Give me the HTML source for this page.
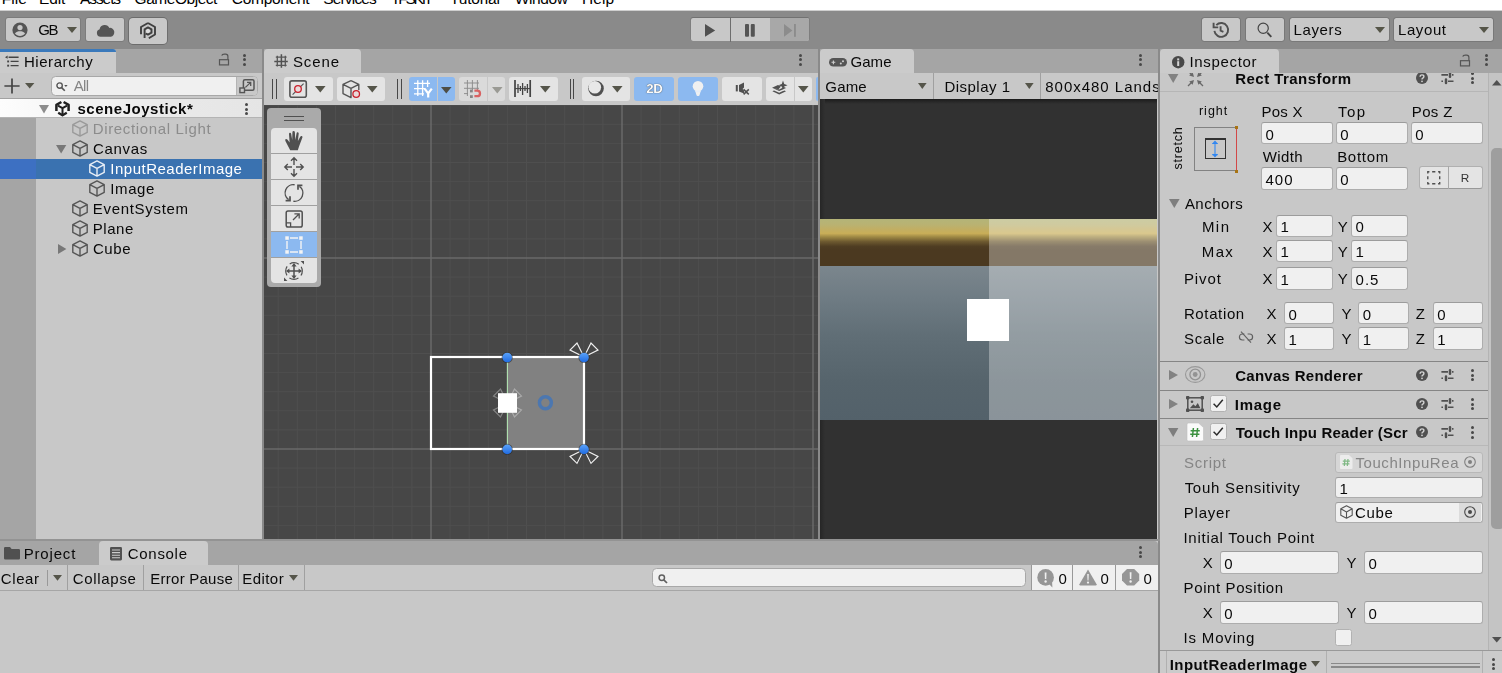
<!DOCTYPE html>
<html><head><meta charset="utf-8">
<style>
*{box-sizing:border-box;margin:0;padding:0}
html,body{width:1502px;height:673px;overflow:hidden;background:#8a8a8a}
body{font-family:"Liberation Sans",sans-serif;font-size:15px;color:#090909;position:relative}
.a{position:absolute}
.t{position:absolute;white-space:nowrap;line-height:20px;height:20px}
.pane,#toolbar,#stb{will-change:transform}
.b{font-weight:bold}
.pane{position:absolute;background:#c8c8c8}
.tabbar{position:absolute;left:0;right:0;top:0;height:24px;background:#a5a5a5}
.tab{position:absolute;top:0;height:24px;background:#cbcbcb;border-radius:4px 4px 0 0}
.btn{position:absolute;background:#e4e4e4;border-radius:2px}
.tb{position:absolute;background:#c8c8c8;border-radius:2px}
.fld{position:absolute;background:#f0f0f0;border:1px solid #adadad;border-top-color:#9c9c9c;border-radius:3px;height:20px;line-height:18px;padding-left:4px;font-size:15px}
svg{position:absolute;overflow:visible}
#f4,#f_pivoty{letter-spacing:1px}
.kb{position:absolute;width:3px}
.kb i{display:block;width:3px;height:3px;border-radius:50%;background:#484848;margin-bottom:1.700px}
.arr{position:absolute;width:0;height:0;border-left:5px solid transparent;border-right:5px solid transparent;border-top:6px solid #555548}
</style><style id="calib">
#t_gb{letter-spacing:-1.231px;margin-left:-0.33px}
#t_layers{letter-spacing:0.639px;margin-left:-1.06px}
#t_layout{letter-spacing:0.599px;margin-left:-0.55px}
#t_hier{letter-spacing:0.570px;margin-left:-0.92px}
#t_all{letter-spacing:-0.564px;margin-left:0.17px}
#t_scene{letter-spacing:0.540px;margin-left:-0.10px}
#t_dl{letter-spacing:0.648px;margin-left:-0.75px}
#t_canvas{letter-spacing:0.692px;margin-left:-0.56px}
#t_iri{letter-spacing:0.491px;margin-left:-0.96px}
#t_image{letter-spacing:0.623px;margin-left:-1.07px}
#t_es{letter-spacing:0.693px;margin-left:-0.78px}
#t_plane{letter-spacing:0.570px;margin-left:-0.78px}
#t_cube{letter-spacing:0.555px;margin-left:-0.56px}
#t_scenetab{letter-spacing:0.936px;margin-left:-1.12px}
#t_gametab{letter-spacing:0.084px;margin-left:-0.61px}
#t_game2{letter-spacing:0.172px;margin-left:-0.47px}
#t_display{letter-spacing:0.492px;margin-left:-0.62px}
#t_insp{letter-spacing:0.685px;margin-left:-1.17px}
#t_rt{letter-spacing:0.451px;margin-left:-0.61px}
#t_right{letter-spacing:1.020px;margin-left:-0.59px}
#t_posx{letter-spacing:0.201px;margin-left:-0.79px}
#t_top{letter-spacing:1.487px;margin-left:-0.03px}
#t_posz{letter-spacing:0.315px;margin-left:-0.84px}
#t_width{letter-spacing:0.415px;margin-left:0.26px}
#t_bottom{letter-spacing:0.725px;margin-left:-0.87px}
#t_anchors{letter-spacing:0.470px;margin-left:0.09px}
#t_min{letter-spacing:1.478px;margin-left:-0.81px}
#t_max{letter-spacing:1.285px;margin-left:-0.84px}
#t_pivot{letter-spacing:0.942px;margin-left:-0.92px}
#t_rot{letter-spacing:0.635px;margin-left:-0.92px}
#t_scl{letter-spacing:0.718px;margin-left:-0.86px}
#t_cr{letter-spacing:0.288px;margin-left:-0.39px}
#t_img{letter-spacing:0.723px;margin-left:-0.68px}
#t_tir{letter-spacing:0.181px;margin-left:0.13px}
#t_script{letter-spacing:0.708px;margin-left:-0.66px}
#t_touh{letter-spacing:0.726px;margin-left:-0.05px}
#t_player{letter-spacing:0.723px;margin-left:-0.84px}
#t_itp{letter-spacing:0.747px;margin-left:-0.99px}
#t_pp{letter-spacing:0.600px;margin-left:-0.79px}
#t_ism{letter-spacing:0.851px;margin-left:-0.99px}
#t_tirea{letter-spacing:0.579px;margin-left:0.15px}
#t_cubef{letter-spacing:0.724px;margin-left:-0.40px}
#t_foot{letter-spacing:0.431px;margin-left:-0.79px}
#t_project{letter-spacing:0.818px;margin-left:-0.79px}
#t_console{letter-spacing:0.693px;margin-left:-0.62px}
#t_clear{letter-spacing:0.638px;margin-left:-0.61px}
#t_collapse{letter-spacing:0.688px;margin-left:-0.45px}
#t_errp{letter-spacing:0.234px;margin-left:-0.95px}
#t_editor{letter-spacing:0.437px;margin-left:-0.84px}
#m_edit{letter-spacing:-0.194px;margin-left:-0.91px}
#m_assets{letter-spacing:-1.101px;margin-left:0.09px}
#m_go{letter-spacing:-0.461px;margin-left:-0.45px}
#m_comp{letter-spacing:-0.284px;margin-left:-0.22px}
#m_serv{letter-spacing:-0.825px;margin-left:-0.82px}
#m_tfs{letter-spacing:-2.210px;margin-left:-0.05px}
#m_tut{letter-spacing:-0.175px;margin-left:0.03px}
#m_win{letter-spacing:-0.381px;margin-left:0.75px}
#m_help{letter-spacing:0.040px;margin-left:-0.91px}
#t_res{letter-spacing:0.980px;margin-left:0.29px}
</style>
</head><body>

<!-- MENU BAR -->
<div class="a" id="menubar" style="left:0;top:0;width:1502px;height:10px;background:#fff;overflow:hidden;font-size:15.5px;color:#000">
<span class="t" id="m_file" style="left:1.800px;top:-11.300px">File</span>
<span class="t" id="m_edit" style="left:40px;top:-11.300px">Edit</span>
<span class="t" id="m_assets" style="left:80px;top:-11.300px">Assets</span>
<span class="t" id="m_go" style="left:135px;top:-11.300px">GameObject</span>
<span class="t" id="m_comp" style="left:232px;top:-11.300px">Component</span>
<span class="t" id="m_serv" style="left:324px;top:-11.300px">Services</span>
<span class="t" id="m_tfs" style="left:391px;top:-11.300px">TFSKIT</span>
<span class="t" id="m_tut" style="left:450px;top:-11.300px">Tutorial</span>
<span class="t" id="m_win" style="left:514px;top:-11.300px">Window</span>
<span class="t" id="m_help" style="left:583px;top:-11.300px">Help</span>
</div>
<div class="a" style="left:0;top:10px;width:1502px;height:1px;background:#cfcfcf"></div>

<!-- MAIN TOOLBAR -->
<div id="toolbar">
<div class="tb" style="left:6px;top:18px;width:74px;height:23px;box-shadow:0 0 0 .7px #787878"></div>
<svg style="left:12px;top:22px" width="16" height="16" viewBox="0 0 16 16"><circle cx="8" cy="8" r="7.6" fill="#555"/><circle cx="8" cy="5.6" r="2.6" fill="#c8c8c8"/><path d="M2.9 11.6C4 9.9 6 9.3 8 9.3s4 .6 5.1 2.3C11.9 13.2 10 14 8 14s-3.9-.8-5.1-2.4z" fill="#c8c8c8"/></svg>
<span class="t" id="t_gb" style="left:38.5px;top:19.700px">GB</span>
<div class="arr" style="left:66.5px;top:27px"></div>
<div class="tb" style="left:86px;top:18px;width:38px;height:23px;box-shadow:0 0 0 .7px #787878"></div>
<svg style="left:95.5px;top:23.5px" width="19" height="13" viewBox="0 0 19 13"><path d="M4.6 12.8a3.9 3.9 0 0 1-1-7.6A5.2 5.2 0 0 1 13.400 3.900a4.200 4.500 0 0 1 1.400 8.900z" fill="#555"/></svg>
<div class="tb" style="left:129px;top:17.600px;width:38px;height:26.600px;border-radius:4px;box-shadow:0 0 0 .9px #6c6c6c"></div>
<svg style="left:140px;top:22px" width="16" height="18" viewBox="0 0 16 18"><circle cx="8.100" cy="9" r="2.300" fill="#dcdcdc"/><path d="M8 1L15 5V12.500L8.800 16.200M8 1L1 5V12.200" fill="none" stroke="#404040" stroke-width="1.900" stroke-linejoin="round"/><path d="M4.600 16V7.300L8 5.400L11.500 7.300V10.700L8 12.600L5.800 11.500" fill="none" stroke="#404040" stroke-width="1.900" stroke-linejoin="round"/></svg>

<div class="tb" style="left:690.5px;top:17.500px;width:118.500px;height:23.700px;box-shadow:0 -0.5px 0 .5px #727272"></div>
<div class="a" style="left:770px;top:17.5px;width:39px;height:23.700px;background:#a8a8a8;border-radius:0 2px 2px 0"></div>
<div class="a" style="left:730px;top:17px;width:1px;height:24.500px;background:#6e6e6e"></div>
<svg style="left:690px;top:17px" width="120" height="25" viewBox="0 0 120 25"><path d="M15 7V19.800L25.200 13.400Z" fill="#505050"/><rect x="55" y="7" width="4" height="12.800" rx="1" fill="#555"/><rect x="60.800" y="7" width="4" height="12.800" rx="1" fill="#555"/><path d="M94 7V19.800L102.400 13.400Z" fill="#8c8c8c"/><rect x="104" y="7" width="1.900" height="12.800" fill="#8c8c8c"/></svg>

<div class="tb" style="left:1201.700px;top:17.500px;width:38.500px;height:23.700px;box-shadow:0 0 0 .8px #747474;border-radius:2.500px"></div>
<svg style="left:1211px;top:20px" width="20" height="20" viewBox="0 0 20 20"><path d="M3.400 10.800A6.900 6.900 0 1 0 5.300 5.100" fill="none" stroke="#505050" stroke-width="1.900"/><path d="M2.600 2.800V7.400H7.200" fill="none" stroke="#505050" stroke-width="1.900"/><path d="M9.600 6.200V10.600L12.400 11.800" fill="none" stroke="#505050" stroke-width="1.900"/></svg>
<div class="tb" style="left:1245.700px;top:17.500px;width:38.500px;height:23.700px;box-shadow:0 0 0 .8px #747474;border-radius:2.500px"></div>
<svg style="left:1255px;top:20px" width="20" height="20" viewBox="0 0 20 20"><circle cx="8.200" cy="8.300" r="5.100" fill="none" stroke="#444" stroke-width="1.200"/><path d="M12.300 12.600L16.300 16.800" stroke="#444" stroke-width="1.900"/></svg>
<div class="tb" style="left:1290px;top:17.500px;width:98.500px;height:23.700px;box-shadow:0 0 0 .8px #747474;border-radius:2.500px"></div>
<span class="t" id="t_layers" style="left:1294.500px;top:19.700px">Layers</span>
<div class="arr" style="left:1374.500px;top:27px"></div>
<div class="tb" style="left:1394px;top:17.500px;width:99px;height:23.700px;box-shadow:0 0 0 .8px #747474;border-radius:2.500px"></div>
<span class="t" id="t_layout" style="left:1398.500px;top:19.700px">Layout</span>
<div class="arr" style="left:1478.500px;top:27px"></div>
</div>

<!-- HIERARCHY -->
<div class="pane" id="hier" style="left:0;top:49px;width:262.300px;height:490px;overflow:hidden">
 <div class="tabbar"></div>
 <div class="tab" style="left:0;width:116px;border-radius:0 3px 0 0"></div>
 <div class="a" style="left:0;top:0;width:116px;height:2.600px;background:#3a79bb;border-radius:0 3px 0 0"></div>
 <svg style="left:4.500px;top:7px" width="14" height="11" viewBox="0 0 14 11"><path d="M3.600 1.200H13.600M5.600 5.400H13.600M5.600 9.600H13.600" stroke="#444" stroke-width="1.400"/><path d="M0 1.200L2.600 -.4V2.800Z" fill="#444"/><rect x="2.200" y="4.500" width="1.900" height="1.900" fill="#444"/><rect x="2.200" y="8.700" width="1.900" height="1.900" fill="#444"/></svg>
 <span class="t" id="t_hier" style="left:24.800px;top:2.600px">Hierarchy</span>
 <svg style="left:218px;top:4px" width="12" height="13" viewBox="0 0 12 13"><rect x="1.500" y="6.700" width="9" height="5.200" fill="none" stroke="#555" stroke-width="1.200"/><path d="M3.800 2.600Q4 1.200 6.400 1.200H7.600Q9.900 1.200 9.900 3.400V6.600" fill="none" stroke="#555" stroke-width="1.200"/></svg>
 <div class="kb" style="left:243.400px;top:4.500px"><i></i><i></i><i></i></div>
 <!-- toolbar -->
 <svg style="left:4px;top:29px" width="16" height="16" viewBox="0 0 16 16"><path d="M8 .4V15.400M.4 8H15.600" stroke="#444" stroke-width="1.700"/></svg>
 <svg style="left:24.8px;top:34px" width="9.4" height="5.6" viewBox="0 0 9.4 5.6"><path d="M0 0H9.4L4.7 5.6Z" fill="#55554a"/></svg>
 <div class="fld" style="left:50.500px;top:27.300px;width:207px;height:19.400px;border-radius:4.500px;border-color:#a8a8a8"></div>
 <div class="a" style="left:235.500px;top:28.300px;width:21px;height:17.400px;background:#c8c8c8;border-left:1px solid #b4b4b4;border-radius:0 3.500px 3.500px 0"></div>
 <svg style="left:239px;top:29.500px" width="16" height="15" viewBox="0 0 16 15"><rect x="4.400" y=".8" width="10.600" height="10.400" rx="1.500" fill="none" stroke="#555" stroke-width="1.500"/><rect x=".9" y="9" width="4.600" height="4.600" fill="#c8c8c8" stroke="#555" stroke-width="1.400"/><path d="M6.400 8.400L11.400 3.600M8 3.400H11.700V7" fill="none" stroke="#555" stroke-width="1.300"/></svg>
 <svg style="left:56px;top:32.500px" width="12" height="10" viewBox="0 0 12 10"><circle cx="3.600" cy="3.600" r="2.700" fill="none" stroke="#555" stroke-width="1.400"/><path d="M5.600 5.600L8.800 8.800" stroke="#555" stroke-width="1.600"/><path d="M8.200 3H11.600L9.900 5Z" fill="#555"/></svg>
 <span class="t" id="t_all" style="left:73.500px;top:26.700px;color:#858585">All</span>
 <!-- list -->
 <div class="a" style="left:0;top:69px;width:36px;height:421px;background:#a5a5a5"></div>
 <div class="a" style="left:0;top:49.200px;width:263px;height:20.200px;background:linear-gradient(90deg,#fdfdfd 0%,#f4f4f4 30%,#e9e9e9 65%,#e5e5e5 100%);border-top:1px solid #a2a2a2;border-bottom:1px solid #b4b4b4"></div>
 <svg style="left:39px;top:56.2px" width="10" height="8.6" viewBox="0 0 10 8.6"><path d="M0 0H10L5.0 8.6Z" fill="#8c8c8c"/></svg>
 <svg style="left:55.100px;top:51.200px" width="15" height="17" viewBox="0 0 15 17"><g fill="none" stroke="#202020" stroke-linejoin="round"><path d="M1.400 11V4.800L6.400 2" stroke-width="2.500"/><path d="M13.600 11V4.800L8.600 2" stroke-width="2.500"/><path d="M3.200 12.800L7.500 15.300L11.800 12.800" stroke-width="2.300"/><path d="M7.500 15.300V8.200M3 5.600L7.500 8.200L12 5.600" stroke-width="2"/></g></svg>
 <span class="t b" id="t_scene" style="left:77.500px;top:49.700px">sceneJoystick*</span>
 <div class="kb" style="left:245.300px;top:54px"><i></i><i></i><i></i></div>
 <svg style="left:72.3px;top:71.4px" width="16" height="17" viewBox="0 0 16 17"><path d="M8 .9L15.200 4.600V12.400L8 16.100L.8 12.400V4.600ZM.8 4.600L8 8.400L15.200 4.600M8 8.400V16.100" fill="none" stroke="#9a9a9a" stroke-width="1.400" stroke-linejoin="round"/></svg>
 <span class="t" id="t_dl" style="left:93.500px;top:69.7px;color:#8c8c8c">Directional Light</span>
 <svg style="left:56px;top:96.3px" width="10.3" height="8.4" viewBox="0 0 10.3 8.4"><path d="M0 0H10.3L5.15 8.4Z" fill="#787878"/></svg>
 <svg style="left:72.3px;top:91.4px" width="16" height="17" viewBox="0 0 16 17"><path d="M8 .9L15.200 4.600V12.400L8 16.100L.8 12.400V4.600ZM.8 4.600L8 8.400L15.200 4.600M8 8.400V16.100" fill="none" stroke="#555" stroke-width="1.400" stroke-linejoin="round"/></svg>
 <span class="t" id="t_canvas" style="left:93.500px;top:89.7px">Canvas</span>
 <div class="a" style="left:0;top:110px;width:263px;height:20px;background:#3a72b0"></div>
 <div class="a" style="left:0;top:110px;width:36px;height:20px;background:#3d70c2"></div>
 <svg style="left:89.3px;top:111.4px" width="16" height="17" viewBox="0 0 16 17"><path d="M8 .9L15.200 4.600V12.400L8 16.100L.8 12.400V4.600ZM.8 4.600L8 8.400L15.200 4.600M8 8.400V16.100" fill="none" stroke="#e8eef6" stroke-width="1.400" stroke-linejoin="round"/></svg>
 <span class="t" id="t_iri" style="left:111.300px;top:109.7px;color:#fff">InputReaderImage</span>
 <svg style="left:89.3px;top:131.39999999999998px" width="16" height="17" viewBox="0 0 16 17"><path d="M8 .9L15.200 4.600V12.400L8 16.100L.8 12.400V4.600ZM.8 4.600L8 8.400L15.200 4.600M8 8.400V16.100" fill="none" stroke="#555" stroke-width="1.400" stroke-linejoin="round"/></svg>
 <span class="t" id="t_image" style="left:111.300px;top:129.7px">Image</span>
 <svg style="left:72.3px;top:151.39999999999998px" width="16" height="17" viewBox="0 0 16 17"><path d="M8 .9L15.200 4.600V12.400L8 16.100L.8 12.400V4.600ZM.8 4.600L8 8.400L15.200 4.600M8 8.400V16.100" fill="none" stroke="#555" stroke-width="1.400" stroke-linejoin="round"/></svg>
 <span class="t" id="t_es" style="left:93.500px;top:149.7px">EventSystem</span>
 <svg style="left:72.3px;top:171.39999999999998px" width="16" height="17" viewBox="0 0 16 17"><path d="M8 .9L15.200 4.600V12.400L8 16.100L.8 12.400V4.600ZM.8 4.600L8 8.400L15.200 4.600M8 8.400V16.100" fill="none" stroke="#555" stroke-width="1.400" stroke-linejoin="round"/></svg>
 <span class="t" id="t_plane" style="left:93.500px;top:169.7px">Plane</span>
 <svg style="left:57.5px;top:194.7px" width="8.4" height="10" viewBox="0 0 8.4 10"><path d="M0 0V10L8.4 5.0Z" fill="#787878"/></svg>
 <svg style="left:72.3px;top:191.39999999999998px" width="16" height="17" viewBox="0 0 16 17"><path d="M8 .9L15.200 4.600V12.400L8 16.100L.8 12.400V4.600ZM.8 4.600L8 8.400L15.200 4.600M8 8.400V16.100" fill="none" stroke="#555" stroke-width="1.400" stroke-linejoin="round"/></svg>
 <span class="t" id="t_cube" style="left:93.500px;top:189.7px">Cube</span>
</div>

<!-- SCENE -->
<div class="pane" id="scene" style="left:264px;top:49px;width:554px;height:490px;overflow:hidden">
 <div class="tabbar"></div>
 <div class="tab" style="left:0;width:97px"></div>
 <svg style="left:10px;top:5px" width="14" height="14" viewBox="0 0 14 14"><path d="M7.400 .3V13.800M.3 7.500H13.800" stroke="#505050" stroke-width="1.500"/><path d="M3.300 1.800V12.600M11.300 1.800V12.600M1.800 3.200H12.600M1.800 11.300H12.600" stroke="#585858" stroke-width="1.300"/></svg>
 <span class="t" id="t_scenetab" style="left:30px;top:2.600px">Scene</span>
 <div class="kb" style="left:535.400px;top:4.700px"><i></i><i></i><i></i></div>
 <div class="a" id="sview" style="left:0;top:56px;width:554px;height:434px;background:#474747;overflow:hidden">
<svg class="a" style="left:0;top:0" width="554" height="434" viewBox="0 0 554 434">
<path d="M14.2 0V434M33.3 0V434M52.4 0V434M71.5 0V434M90.6 0V434M109.7 0V434M128.8 0V434M147.9 0V434M186.1 0V434M205.2 0V434M224.3 0V434M243.4 0V434M262.5 0V434M281.6 0V434M300.7 0V434M319.8 0V434M338.9 0V434M377.1 0V434M396.2 0V434M415.3 0V434M434.4 0V434M453.5 0V434M472.6 0V434M491.7 0V434M510.8 0V434M529.9 0V434M0 0.2H554M0 19.3H554M0 38.4H554M0 57.5H554M0 76.6H554M0 95.7H554M0 114.8H554M0 133.9H554M0 172.1H554M0 191.2H554M0 210.3H554M0 229.4H554M0 248.5H554M0 267.6H554M0 286.7H554M0 305.8H554M0 324.9H554M0 363.1H554M0 382.2H554M0 401.3H554M0 420.4H554" stroke="#4f4f4f" stroke-width="1" fill="none"/>
<path d="M167.0 0V434M358.0 0V434M549.0 0V434M0 153.0H554M0 344.0H554" stroke="#6a6a6a" stroke-width="1.500" fill="none"/>
<rect x="243.5" y="252" width="76.5" height="92" fill="#818181"/>
<path d="M243.4 252V344" stroke="#b4e6b4" stroke-width="1.1"/>
<rect x="167" y="252" width="153" height="92" fill="none" stroke="#fff" stroke-width="2.2"/>
<path d="M243.5 298L229.5 291L236.5 284ZM243.5 298L229.5 305L236.5 312ZM243.5 298L257.5 291L250.5 284ZM243.5 298L257.5 305L250.5 312Z" fill="none" stroke="#fff" stroke-opacity="0.33" stroke-width="1.2"/>
<rect x="234" y="288.2" width="19" height="19.6" fill="#fff"/>
<circle cx="281.4" cy="297.8" r="5.95" fill="none" stroke="#3f74bc" stroke-opacity="0.8" stroke-width="3.5"/>
<path d="M320 252L306 245L313 238ZM320 252L334 245L327 238ZM320 344.4L306 351.4L313 358.4ZM320 344.4L334 351.4L327 358.4Z" fill="none" stroke="#fff" stroke-opacity=".92" stroke-width="1.150"/>
<defs><linearGradient id="hg" x1="0" y1="0" x2="0" y2="1"><stop offset="0" stop-color="#5aa2fa"/><stop offset="1" stop-color="#1f6ae0"/></linearGradient></defs>
<circle cx="243.2" cy="252.5" r="5.6" fill="#222" fill-opacity="0.55"/><circle cx="243.2" cy="252.5" r="4.8" fill="url(#hg)"/>
<circle cx="320" cy="252.5" r="5.6" fill="#222" fill-opacity="0.55"/><circle cx="320" cy="252.5" r="4.8" fill="url(#hg)"/>
<circle cx="243.2" cy="344.4" r="5.6" fill="#222" fill-opacity="0.55"/><circle cx="243.2" cy="344.4" r="4.8" fill="url(#hg)"/>
<circle cx="320" cy="344.4" r="5.6" fill="#222" fill-opacity="0.55"/><circle cx="320" cy="344.4" r="4.8" fill="url(#hg)"/>
</svg>

<div class="a" style="left:3px;top:3px;width:54px;height:179px;background:#aaa;border-radius:4px"></div>
<div class="a" style="left:20px;top:11px;width:20px;height:1.3px;background:#505050"></div><div class="a" style="left:20px;top:14.799999999999997px;width:20px;height:1.3px;background:#505050"></div>
<div class="a" style="left:7px;top:23px;width:46px;height:25px;background:#e4e4e4;border-radius:4px 4px 0 0"></div>
<div class="a" style="left:7px;top:48px;width:46px;height:1px;background:#a0a0a0"></div>
<div class="a" style="left:7px;top:49px;width:46px;height:25px;background:#e4e4e4;border-radius:0"></div>
<div class="a" style="left:7px;top:74px;width:46px;height:1px;background:#a0a0a0"></div>
<div class="a" style="left:7px;top:75px;width:46px;height:25px;background:#e4e4e4;border-radius:0"></div>
<div class="a" style="left:7px;top:100px;width:46px;height:1px;background:#a0a0a0"></div>
<div class="a" style="left:7px;top:101px;width:46px;height:25px;background:#e4e4e4;border-radius:0"></div>
<div class="a" style="left:7px;top:126px;width:46px;height:1px;background:#a0a0a0"></div>
<div class="a" style="left:7px;top:127px;width:46px;height:25px;background:#8cb9f0;border-radius:0"></div>
<div class="a" style="left:7px;top:152px;width:46px;height:1px;background:#a0a0a0"></div>
<div class="a" style="left:7px;top:153px;width:46px;height:25px;background:#e4e4e4;border-radius:0 0 4px 4px"></div>
<svg style="left:20px;top:25px" width="20" height="21" viewBox="0 0 20 21"><path d="M6.200 20.200L1.400 11Q.6 9.200 2.200 9Q3.400 9 4.200 10.600L5.600 12.600L5 4Q5 2.800 6 2.800Q7 2.800 7.200 4L8.200 10L8.400 2.400Q8.400 1 9.600 1Q10.800 1 10.900 2.400L11.300 10L12.600 3.200Q12.800 2 13.800 2.200Q14.800 2.400 14.700 3.600L13.900 11L16.400 6.600Q17 5.600 17.900 6Q18.800 6.500 18.400 7.600L15.200 16L13.800 20.200Z" fill="#505050"/></svg>
<svg style="left:20px;top:52px" width="20" height="20" viewBox="0 0 20 20"><path d="M10 1V8M10 12V19M1 10H8M12 10H19M7 3.800L10 .8L13 3.800M7 16.200L10 19.200L13 16.200M3.800 7L.8 10L3.800 13M16.200 7L19.200 10L16.200 13" fill="none" stroke="#505050" stroke-width="1.400"/></svg>
<svg style="left:20px;top:78px" width="20" height="20" viewBox="0 0 20 20"><path d="M10.600 1.800A8.200 8.200 0 0 0 4.600 16.600M9.400 18.200A8.200 8.200 0 0 0 15.400 3.400" fill="none" stroke="#505050" stroke-width="1.400"/><path d="M1.600 17.600H6V13.200M18.400 2.400H14V6.800" fill="none" stroke="#505050" stroke-width="1.700"/></svg>
<svg style="left:21px;top:105px" width="18" height="18" viewBox="0 0 18 18"><rect x="1.200" y="1" width="16" height="16" rx="1.800" fill="none" stroke="#505050" stroke-width="1.500"/><path d="M1.200 12.800H5.600V17" fill="none" stroke="#505050" stroke-width="1.300"/><path d="M8 10L14 4M9.400 3.800H14.200V8.600" fill="none" stroke="#505050" stroke-width="1.300"/></svg>
<svg style="left:21px;top:131px" width="18" height="18" viewBox="0 0 18 18"><path d="M2 5V13M16 5V13M5 2H13M5 16H13" stroke="#f4f4f4" stroke-width="1.400"/><rect x=".3" y=".3" width="3.500" height="3.500" fill="#f4f4f4"/><rect x="14.200" y=".3" width="3.500" height="3.500" fill="#f4f4f4"/><rect x=".3" y="14.200" width="3.500" height="3.500" fill="#f4f4f4"/><rect x="14.200" y="14.200" width="3.500" height="3.500" fill="#f4f4f4"/></svg>
<svg style="left:20px;top:156px" width="20" height="20" viewBox="0 0 20 20"><circle cx="10" cy="10" r="8.300" fill="none" stroke="#505050" stroke-width="1.200" stroke-dasharray="9.500 3.540" stroke-dashoffset="4.750"/><path d="M10 3.600V16.400M3.600 10H16.400" stroke="#505050" stroke-width="1.500"/><path d="M10 2L12.600 5.400H7.400ZM10 18L12.600 14.600H7.400ZM2 10L5.400 7.400V12.600ZM18 10L14.600 7.400V12.600Z" fill="#505050"/><path d="M20 0V3.400L16.600 0ZM0 20V16.600L3.400 20Z" fill="#505050"/></svg>
 </div>
</div>

<!-- SCENE TOOLBAR -->
<div id="stb">
<div class="a" style="left:271.9px;top:79px;width:1.2px;height:20px;background:#484848"></div><div class="a" style="left:275.9px;top:79px;width:1.2px;height:20px;background:#484848"></div>
<div class="a" style="left:284px;top:77px;width:49px;height:24px;background:#e4e4e4;border-radius:3px"></div>
<svg style="left:288px;top:79px" width="20" height="20" viewBox="0 0 20 20"><rect x="1.9" y="1.9" width="16.4" height="16.4" rx="2" fill="none" stroke="#555" stroke-width="1.6"/><path d="M4.6 15.600L15.600 4.600" stroke="#555" stroke-width="1.200"/><circle cx="10" cy="10" r="3.300" fill="#eadada" stroke="#c8202c" stroke-width="1.300"/></svg>
<svg style="left:314.8px;top:86.2px" width="10.6" height="6.4" viewBox="0 0 10.6 6.4"><path d="M0 0H10.6L5.3 6.4Z" fill="#55554a"/></svg>
<div class="a" style="left:337.2px;top:77px;width:48px;height:24px;background:#e4e4e4;border-radius:3px"></div>
<svg style="left:341px;top:79px" width="20" height="20" viewBox="0 0 20 20"><path d="M10 1.600L17.800 5.400V11M10 1.600L2 5.400V14.600L10 18.600V9.400L2 5.400M10 9.400L17.800 5.400" fill="none" stroke="#555" stroke-width="1.400" stroke-linejoin="round"/><circle cx="15.200" cy="15" r="3.300" fill="#eadada" stroke="#c8202c" stroke-width="1.300"/></svg>
<svg style="left:367.2px;top:86.2px" width="10.6" height="6.4" viewBox="0 0 10.6 6.4"><path d="M0 0H10.6L5.3 6.4Z" fill="#55554a"/></svg>
<div class="a" style="left:397.0px;top:79px;width:1.2px;height:20px;background:#484848"></div><div class="a" style="left:401.2px;top:79px;width:1.2px;height:20px;background:#484848"></div>
<div class="a" style="left:409px;top:77px;width:27.8px;height:24px;background:#8cb9f0;border-radius:3px 0 0 3px"></div><div class="a" style="left:438px;top:77px;width:17px;height:24px;background:#8cb9f0;border-radius:0 3px 3px 0"></div>
<svg style="left:412px;top:79px" width="22" height="20" viewBox="0 0 22 20"><path d="M2 4.300H18M2 9.600H13M2 14.800H12M5.800 1.300V17M10.600 1.300V17M15.600 1.300V8" stroke="#fff" stroke-width="1.300" fill="none"/><path d="M12.600 9.600L16.200 14.400L19.800 9.600M16.200 14V18.600" stroke="#fff" stroke-width="2.200" fill="none"/></svg>
<svg style="left:441px;top:86.6px" width="10.6" height="6.4" viewBox="0 0 10.6 6.4"><path d="M0 0H10.6L5.3 6.4Z" fill="#4e4e46"/></svg>
<div class="a" style="left:458.8px;top:77px;width:28.2px;height:24px;background:#dadada;border-radius:3px 0 0 3px"></div><div class="a" style="left:488.1px;top:77px;width:17px;height:24px;background:#dadada;border-radius:0 3px 3px 0"></div>
<svg style="left:462px;top:79px" width="22" height="20" viewBox="0 0 22 20"><path d="M2 4H17M2 9.300H17M2 14.600H6M5.400 1V17M10.400 1V11M15.400 1V11" stroke="#8c8c8c" stroke-width=".95" fill="none"/><rect x="8" y="10.600" width="2.800" height="2.800" fill="#858585"/><rect x="8" y="16.200" width="2.800" height="2.800" fill="#858585"/><path d="M12.400 11.600H15.200A2.600 2.600 0 0 1 15.200 17.200H12.400" fill="none" stroke="#d86262" stroke-width="2.300"/></svg>
<svg style="left:491.5px;top:86.6px" width="10.6" height="6.4" viewBox="0 0 10.6 6.4"><path d="M0 0H10.6L5.3 6.4Z" fill="#9a9a94"/></svg>
<div class="a" style="left:508.9px;top:77px;width:49px;height:24px;background:#e4e4e4;border-radius:3px"></div>
<svg style="left:512px;top:79px" width="22" height="20" viewBox="0 0 22 20"><path d="M3 1V18M18.200 1V18" stroke="#444" stroke-width="1.700"/><path d="M6 5V14M8.400 7V12M10.600 4V16M13 7V12M15.400 5V14" stroke="#444" stroke-width="1.300"/><path d="M3 9.600H18" stroke="#444" stroke-width="1.100"/></svg>
<svg style="left:539.8px;top:86.2px" width="10.6" height="6.4" viewBox="0 0 10.6 6.4"><path d="M0 0H10.6L5.3 6.4Z" fill="#55554a"/></svg>
<div class="a" style="left:569.5px;top:79px;width:1.2px;height:20px;background:#484848"></div><div class="a" style="left:573.3px;top:79px;width:1.2px;height:20px;background:#484848"></div>
<div class="a" style="left:581.8px;top:77px;width:48.2px;height:24px;background:#e4e4e4;border-radius:3px"></div>
<svg style="left:587px;top:79px" width="18" height="19" viewBox="0 0 18 19"><circle cx="9" cy="9.500" r="7.800" fill="#505050"/><circle cx="7.800" cy="8.200" r="6.300" fill="#e8e8e8"/></svg>
<svg style="left:612.2px;top:86.2px" width="10.6" height="6.4" viewBox="0 0 10.6 6.4"><path d="M0 0H10.6L5.3 6.4Z" fill="#55554a"/></svg>
<div class="a" style="left:634px;top:77px;width:40px;height:24px;background:#8cb9f0;border-radius:3px"></div>
<span class="t b" style="left:646.300px;top:79.200px;font-size:13.200px;letter-spacing:-.5px;color:#fafafa;text-shadow:0 0 1.200px #345,0 0 .5px #345">2D</span>
<div class="a" style="left:678px;top:77px;width:40px;height:24px;background:#8cb9f0;border-radius:3px"></div>
<svg style="left:691px;top:80px" width="14" height="17" viewBox="0 0 14 17"><circle cx="7" cy="6.300" r="5.300" fill="#f0f0f0"/><path d="M4.200 10.500H9.800V11.800L8.600 13H5.400L4.200 11.800Z" fill="#e4ecf8"/><path d="M4.600 12.200H9.400L8.400 15.400Q7 16.600 5.600 15.400Z" fill="#f0f0f0"/></svg>
<div class="a" style="left:722px;top:77px;width:40px;height:24px;background:#e4e4e4;border-radius:3px"></div>
<svg style="left:734px;top:81px" width="17" height="15" viewBox="0 0 17 15"><rect x="1.800" y="4" width="2" height="6.400" fill="#505050"/><path d="M5 4L10 1.400V6.500L8.600 8L10 9.600V12.600L5 10.400Z" fill="#505050"/><path d="M9.600 8.400L14.800 13.400M14.800 8.400L9.600 13.400" stroke="#505050" stroke-width="1.500"/></svg>
<div class="a" style="left:766px;top:77px;width:28px;height:24px;background:#e4e4e4;border-radius:3px 0 0 3px"></div><div class="a" style="left:795px;top:77px;width:17px;height:24px;background:#e4e4e4;border-radius:0 3px 3px 0"></div>
<svg style="left:771px;top:80px" width="18" height="16" viewBox="0 0 18 16"><path d="M1 7.800L7 5L9.800 6.600L7.400 9.400L1 7.800ZM1 7.800L8.200 11L15 8L13 7L8.200 9.400Z" fill="#505050"/><path d="M1.400 11.200L8.200 14.600L15 11.200L13.400 10.400L8.200 12.800L3 10.400Z" fill="#505050"/><path d="M12 .6L13.200 4L16.600 5.200L13.200 6.400L12 9.800L10.800 6.400L7.400 5.200L10.800 4Z" fill="#505050"/></svg>
<svg style="left:798.2px;top:86.4px" width="10.6" height="6.4" viewBox="0 0 10.6 6.4"><path d="M0 0H10.6L5.3 6.4Z" fill="#55554a"/></svg>
<div class="a" style="left:816px;top:77px;width:2px;height:24px;background:#8cb9f0;border-radius:3px 0 0 3px"></div>
</div>

<!-- GAME -->
<div class="pane" id="game" style="left:820px;top:49px;width:338px;height:490px;overflow:hidden">
 <div class="tabbar"></div>
 <div class="tab" style="left:0;width:94px"></div>
 <svg style="left:9px;top:9px" width="18" height="9" viewBox="0 0 18 9"><rect x="0" y="0" width="18" height="8.600" rx="4.300" fill="#555"/><path d="M4.400 2.400V6.200M2.500 4.300H6.300" stroke="#d0d0d0" stroke-width="1.100"/><circle cx="11.800" cy="5.400" r="1" fill="#d0d0d0"/><circle cx="14" cy="3.200" r="1" fill="#d0d0d0"/></svg>
 <span class="t" id="t_gametab" style="left:31px;top:2.500px">Game</span>
 <div class="kb" style="left:319.400px;top:4.700px"><i></i><i></i><i></i></div>
 <span class="t" id="t_game2" style="left:5.800px;top:28px">Game</span>
 <svg style="left:98.300px;top:33.800px" width="8.600" height="6" viewBox="0 0 8.600 6"><path d="M0 0H8.600L4.300 6Z" fill="#55554a"/></svg>
 <div class="a" style="left:113px;top:24px;width:1px;height:26px;background:#a0a0a0"></div>
 <span class="t" id="t_display" style="left:125px;top:28px">Display 1</span>
 <svg style="left:205px;top:33.800px" width="8.600" height="6" viewBox="0 0 8.600 6"><path d="M0 0H8.600L4.300 6Z" fill="#55554a"/></svg>
 <div class="a" style="left:220px;top:24px;width:1px;height:26px;background:#a0a0a0"></div>
 <span class="t" id="t_res" style="left:225px;top:28px">800x480 Lands</span>
 <div class="a" id="gview" style="left:0;top:49.500px;width:337px;height:440.500px;background:#313131;overflow:hidden">
  <div class="a" style="left:0;top:0;width:337px;height:5px;background:linear-gradient(#1c1c1c,#313131)"></div>
  <div class="a" style="left:0;top:0;width:5px;height:440px;background:linear-gradient(90deg,#262626,#313131)"></div>
  <div class="a" id="gimg" style="left:0;top:120px;width:337px;height:201.700px;overflow:hidden">
   <div class="a" style="left:0;top:0;width:337px;height:48px;background:linear-gradient(#b4b478 0%,#b9b272 12%,#c2ae62 22%,#c9ae58 30%,#a08a45 37%,#6e5a30 47%,#4f3d22 57%,#4b3920 64%,#4b3920 100%)"></div>
   <div class="a" style="left:0;top:47.500px;width:337px;height:155px;background:linear-gradient(#7b868d 0%,#6f7c84 20%,#606e76 45%,#56646c 75%,#53616a 100%)"></div>
   <div class="a" style="left:169px;top:0;width:168px;height:202px;background:rgba(255,255,255,.32)"></div>
   <div class="a" style="left:147.300px;top:80.200px;width:42.200px;height:42px;background:#fff"></div>
  </div>
 </div>
</div>

<!-- INSPECTOR -->
<div class="pane" id="insp" style="left:1160px;top:49px;width:342px;height:624px;overflow:hidden">
 <div class="tabbar"></div>
 <div class="tab" style="left:0;width:119px"></div>
<svg style="left:11.8px;top:6.8px" width="12.400" height="12.400" viewBox="0 0 12.400 12.400"><circle cx="6.200" cy="6.200" r="6.200" fill="#484848"/><rect x="5.200" y="5.200" width="2" height="4.800" fill="#d4d4d4"/><rect x="5.200" y="2.400" width="2" height="2" fill="#d4d4d4"/></svg>
<span class="t" id="t_insp" style="left:30.6px;top:3.18px;font-size:15px;">Inspector</span>
<svg style="left:298.5px;top:4.5px" width="12" height="13" viewBox="0 0 12 13"><rect x="1.500" y="6.700" width="9" height="5.200" fill="none" stroke="#555" stroke-width="1.200"/><path d="M3.800 2.600Q4 1.200 6.400 1.200H7.600Q9.900 1.200 9.900 3.400V6.600" fill="none" stroke="#555" stroke-width="1.200"/></svg>
<div class="kb" style="left:324.6px;top:4.6px"><i></i><i></i><i></i></div>
<div class="a" id="icontent" style="left:0;top:23.7px;width:342px;height:577.6999999999999px;overflow:hidden">
<div class="a" style="left:328.3px;top:0;width:14px;height:578px;background:#c4c4c4;border-left:1px solid #b4b4b4"></div>
<div class="a" style="left:331px;top:75.5px;width:14px;height:381.00000000000006px;background:#9e9e9e;border-radius:5px"></div>
<svg style="left:331.5px;top:7.1px" width="9.500" height="5.500" viewBox="0 0 9.500 5.500"><path d="M0 5.500H9.500L4.750 0Z" fill="#505050"/></svg>
<svg style="left:331.5px;top:564.3px" width="9.500" height="5.500" viewBox="0 0 9.500 5.500"><path d="M0 0H9.500L4.750 5.500Z" fill="#505050"/></svg>
<svg style="left:8px;top:1.5px" width="10.4" height="9" viewBox="0 0 10.4 9"><path d="M0 0H10.4L5.2 9Z" fill="#828282"/></svg>
<svg style="left:26.6px;top:-3.2px" width="17" height="17" viewBox="0 0 17 17"><g fill="#686868"><path d="M7 7L2.200 5.600L5.600 2.200Z"/><path d="M10 7L14.800 5.600L11.400 2.200Z"/><path d="M7 10L2.200 11.400L5.600 14.800Z"/><path d="M10 10L14.800 11.400L11.400 14.800Z"/></g><path d="M1 1L5 5M16 1L12 5M1 16L5 12M16 16L12 12" stroke="#686868" stroke-width="1.300"/></svg>
<span class="t b" id="t_rt" style="left:75.9px;top:-3.93px;font-size:15px;">Rect Transform</span>
<svg style="left:255.7px;top:-0.6px" width="12" height="12" viewBox="0 0 12 12"><circle cx="6" cy="6" r="6" fill="#505050"/><path d="M4.100 4.700Q4.100 2.900 6 2.900Q7.900 2.900 7.900 4.500Q7.900 5.500 6.900 6Q6 6.500 6 7.400" fill="none" stroke="#d4d4d4" stroke-width="1.400"/><circle cx="6" cy="9.300" r=".9" fill="#d4d4d4"/></svg>
<svg style="left:280.5px;top:-0.8px" width="13" height="12" viewBox="0 0 13 12"><path d="M.4 2.900H7M11 2.900H12.500M.4 9.300H2M7 9.300H12.500" stroke="#505050" stroke-width="1.600"/><path d="M9 1.200V4.700M5 7.500V11" stroke="#505050" stroke-width="2.500" stroke-linecap="round"/></svg>
<div class="kb" style="left:310.5px;top:-0.7px"><i></i><i></i><i></i></div>
<div class="a" style="left:0px;top:18.3px;width:328.3px;height:1px;background:#b6b6b6"></div>
<span class="t" id="t_right" style="left:39.5px;top:28.51px;font-size:12.5px;">right</span>
<span class="t" id="t_stretch" style="left:-12px;top:65.7px;width:60px;text-align:center;font-size:12.500px;letter-spacing:.75px;transform:rotate(-90deg)">stretch</span>
<div class="a" style="left:34px;top:54.3px;width:43px;height:43.700px;border:1px solid #828282;border-top-width:1.600px"></div>
<div class="a" style="left:75.9px;top:55.3px;width:1.300px;height:42px;background:#d24848"></div>
<div class="a" style="left:75px;top:53.3px;width:3px;height:3px;background:#a87414"></div>
<div class="a" style="left:75px;top:97.1px;width:3px;height:3px;background:#a87414"></div>
<div class="a" style="left:45px;top:65.3px;width:20.800px;height:21px;border:1.400px solid #323232;border-top-width:2px"></div>
<svg style="left:51px;top:67.3px" width="8" height="18" viewBox="0 0 8 18"><path d="M4 1.200V16.800M1.200 3.400H6.800M1.200 14.600H6.800M1.700 3.800L4 1.200L6.300 3.800M1.700 14.200L4 16.800L6.300 14.200" fill="none" stroke="#2f86f2" stroke-width="1.050"/></svg>
<span class="t" id="t_posx" style="left:102.4px;top:28.87px;font-size:15px;">Pos X</span>
<span class="t" id="t_top" style="left:178px;top:28.87px;font-size:15px;">Top</span>
<span class="t" id="t_posz" style="left:252.7px;top:28.87px;font-size:15px;">Pos Z</span>
<div class="fld" style="left:101px;top:49.3px;width:72px;height:22px;"></div>
<span class="t" id="f1" style="left:105.5px;top:52.07px;font-size:15px;">0</span>
<div class="fld" style="left:176px;top:49.3px;width:72px;height:22px;"></div>
<span class="t" id="f2" style="left:180.3px;top:52.07px;font-size:15px;">0</span>
<div class="fld" style="left:251px;top:49.3px;width:72px;height:22px;"></div>
<span class="t" id="f3" style="left:255.3px;top:52.07px;font-size:15px;">0</span>
<span class="t" id="t_width" style="left:102.4px;top:74.37px;font-size:15px;">Width</span>
<span class="t" id="t_bottom" style="left:178px;top:74.37px;font-size:15px;">Bottom</span>
<div class="fld" style="left:101px;top:94.3px;width:72px;height:23px;"></div>
<span class="t" id="f4" style="left:105.5px;top:97.17px;font-size:15px;">400</span>
<div class="fld" style="left:176px;top:94.3px;width:72px;height:23px;"></div>
<span class="t" id="f5" style="left:180.3px;top:97.17px;font-size:15px;">0</span>
<div class="a" style="left:258.5px;top:93.1px;width:64.200px;height:23.600px;background:#e4e4e4;border:1px solid #b0b0b0;border-bottom-color:#999;border-radius:3px"></div>
<div class="a" style="left:288px;top:93.8px;width:1px;height:22.400px;background:#a8a8a8"></div>
<svg style="left:266.8px;top:98.1px" width="13.500" height="13.500" viewBox="0 0 13.500 13.500"><rect x=".8" y=".8" width="11.900" height="11.900" fill="none" stroke="#505050" stroke-width="1.400" stroke-dasharray="3.200 2.750" stroke-dashoffset="1.600"/></svg>
<span class="t" id="t_R" style="left:300.8px;top:95.35px;font-size:11.8px;color:#333">R</span>
<svg style="left:8.8px;top:126.5px" width="10.6" height="9" viewBox="0 0 10.6 9"><path d="M0 0H10.6L5.3 9Z" fill="#7e7e7e"/></svg>
<span class="t" id="t_anchors" style="left:24.8px;top:120.97px;font-size:15px;">Anchors</span>
<span class="t" id="t_min" style="left:42.7px;top:143.88px;font-size:15px;">Min</span>
<span class="t" id="t_minx" style="left:102.6px;top:143.88px;font-size:15px;">X</span>
<div class="fld" style="left:116px;top:142.3px;width:57px;height:22px;"></div>
<span class="t" id="f_minx" style="left:120.5px;top:144.77px;font-size:15px;">1</span>
<span class="t" id="t_miny" style="left:177.8px;top:143.88px;font-size:15px;">Y</span>
<div class="fld" style="left:191px;top:142.3px;width:57px;height:22px;"></div>
<span class="t" id="f_miny" style="left:195.6px;top:144.77px;font-size:15px;">0</span>
<span class="t" id="t_max" style="left:42.7px;top:168.88px;font-size:15px;">Max</span>
<span class="t" id="t_maxx" style="left:102.6px;top:168.88px;font-size:15px;">X</span>
<div class="fld" style="left:116px;top:167.3px;width:57px;height:22px;"></div>
<span class="t" id="f_maxx" style="left:120.5px;top:169.77px;font-size:15px;">1</span>
<span class="t" id="t_maxy" style="left:177.8px;top:168.88px;font-size:15px;">Y</span>
<div class="fld" style="left:191px;top:167.3px;width:57px;height:22px;"></div>
<span class="t" id="f_maxy" style="left:195.6px;top:169.77px;font-size:15px;">1</span>
<span class="t" id="t_pivot" style="left:24.8px;top:196.08px;font-size:15px;">Pivot</span>
<span class="t" id="t_pivotx" style="left:102.6px;top:196.08px;font-size:15px;">X</span>
<div class="fld" style="left:116px;top:194.3px;width:57px;height:23px;"></div>
<span class="t" id="f_pivotx" style="left:120.5px;top:196.98px;font-size:15px;">1</span>
<span class="t" id="t_pivoty" style="left:177.8px;top:196.08px;font-size:15px;">Y</span>
<div class="fld" style="left:191px;top:194.3px;width:57px;height:23px;"></div>
<span class="t" id="f_pivoty" style="left:195.6px;top:196.98px;font-size:15px;">0.5</span>
<span class="t" id="t_rot" style="left:24.8px;top:231.08px;font-size:15px;">Rotation</span>
<span class="t" id="t_rotx" style="left:106.4px;top:231.08px;font-size:15px;">X</span>
<div class="fld" style="left:124px;top:229.3px;width:50px;height:22px;"></div>
<span class="t" id="f_rotx" style="left:128.6px;top:231.88px;font-size:15px;">0</span>
<span class="t" id="t_roty" style="left:181.6px;top:231.08px;font-size:15px;">Y</span>
<div class="fld" style="left:198px;top:229.3px;width:51px;height:22px;"></div>
<span class="t" id="f_roty" style="left:202.7px;top:231.88px;font-size:15px;">0</span>
<span class="t" id="t_rotz" style="left:255.8px;top:231.08px;font-size:15px;">Z</span>
<div class="fld" style="left:273px;top:229.3px;width:50px;height:22px;"></div>
<span class="t" id="f_rotz" style="left:277.3px;top:231.88px;font-size:15px;">0</span>
<span class="t" id="t_scl" style="left:24.8px;top:256.08px;font-size:15px;">Scale</span>
<span class="t" id="t_sclx" style="left:106.4px;top:256.08px;font-size:15px;">X</span>
<div class="fld" style="left:124px;top:254.3px;width:50px;height:23px;"></div>
<span class="t" id="f_sclx" style="left:128.6px;top:256.98px;font-size:15px;">1</span>
<span class="t" id="t_scly" style="left:181.6px;top:256.08px;font-size:15px;">Y</span>
<div class="fld" style="left:198px;top:254.3px;width:51px;height:23px;"></div>
<span class="t" id="f_scly" style="left:202.7px;top:256.98px;font-size:15px;">1</span>
<span class="t" id="t_sclz" style="left:255.8px;top:256.08px;font-size:15px;">Z</span>
<div class="fld" style="left:273px;top:254.3px;width:50px;height:23px;"></div>
<span class="t" id="f_sclz" style="left:277.3px;top:256.98px;font-size:15px;">1</span>
<svg style="left:77.8px;top:258.8px" width="16" height="12" viewBox="0 0 16 12"><path d="M6.400 3H4.400A3 3 0 0 0 4.400 9H6.400M9.600 3H11.600A3 3 0 0 1 11.600 9H9.600" fill="none" stroke="#606060" stroke-width="1.200"/><path d="M3 .6L13 11.600" stroke="#606060" stroke-width="1.100"/></svg>
<div class="a" style="left:0px;top:288.1px;width:328.3px;height:1px;background:#858585"></div>
<svg style="left:9.2px;top:297.6px" width="9" height="10" viewBox="0 0 9 10"><path d="M0 0V10L9 5.0Z" fill="#828282"/></svg>
<svg style="left:25px;top:293.8px" width="20.500" height="17" viewBox="0 0 20.500 17"><ellipse cx="10.200" cy="8.500" rx="9.700" ry="7.900" fill="none" stroke="#999" stroke-width="1.100"/><circle cx="10.200" cy="8.500" r="5.300" fill="none" stroke="#939393" stroke-width="1.300"/><circle cx="10.200" cy="8.500" r="2.400" fill="#939393"/></svg>
<span class="t b" id="t_cr" style="left:75.5px;top:293.08px;font-size:15px;">Canvas Renderer</span>
<svg style="left:255.7px;top:296.5px" width="12" height="12" viewBox="0 0 12 12"><circle cx="6" cy="6" r="6" fill="#505050"/><path d="M4.100 4.700Q4.100 2.900 6 2.900Q7.900 2.900 7.900 4.500Q7.900 5.500 6.900 6Q6 6.500 6 7.400" fill="none" stroke="#d4d4d4" stroke-width="1.400"/><circle cx="6" cy="9.300" r=".9" fill="#d4d4d4"/></svg>
<svg style="left:280.5px;top:296.3px" width="13" height="12" viewBox="0 0 13 12"><path d="M.4 2.900H7M11 2.900H12.500M.4 9.300H2M7 9.300H12.500" stroke="#505050" stroke-width="1.600"/><path d="M9 1.200V4.700M5 7.500V11" stroke="#505050" stroke-width="2.500" stroke-linecap="round"/></svg>
<div class="kb" style="left:310.5px;top:296.4px"><i></i><i></i><i></i></div>
<div class="a" style="left:0px;top:317.0px;width:328.3px;height:1px;background:#858585"></div>
<svg style="left:9.2px;top:326.3px" width="9" height="10" viewBox="0 0 9 10"><path d="M0 0V10L9 5.0Z" fill="#828282"/></svg>
<svg style="left:26px;top:323.3px" width="18" height="16" viewBox="0 0 18 16"><rect x="1.800" y="1.800" width="14.400" height="12.400" fill="none" stroke="#505050" stroke-width="1.500"/><g fill="#505050"><rect x="0" y="0" width="3.400" height="3.400" rx=".8"/><rect x="14.600" y="0" width="3.400" height="3.400" rx=".8"/><rect x="0" y="12.600" width="3.400" height="3.400" rx=".8"/><rect x="14.600" y="12.600" width="3.400" height="3.400" rx=".8"/><path d="M3.800 12.200L7.400 8.200L9.400 10.200L11.800 7L14.400 12.200Z"/><circle cx="6" cy="5.800" r="1.300"/></g></svg>
<div class="a" style="left:50.3px;top:322.7px;width:16.4px;height:17px;background:#f0f0f0;border:1px solid #b2b2b2;border-radius:2.500px"></div>
<svg style="left:50.3px;top:322.7px" width="16.4" height="17" viewBox="0 0 16.400 17"><path d="M3.600 8.800L6.800 12L12.800 4.800" fill="none" stroke="#2a2a2a" stroke-width="1.500"/></svg>
<span class="t b" id="t_img" style="left:75.5px;top:321.98px;font-size:15px;">Image</span>
<svg style="left:255.7px;top:325.5px" width="12" height="12" viewBox="0 0 12 12"><circle cx="6" cy="6" r="6" fill="#505050"/><path d="M4.100 4.700Q4.100 2.900 6 2.900Q7.900 2.900 7.900 4.500Q7.900 5.500 6.900 6Q6 6.500 6 7.400" fill="none" stroke="#d4d4d4" stroke-width="1.400"/><circle cx="6" cy="9.300" r=".9" fill="#d4d4d4"/></svg>
<svg style="left:280.5px;top:325.3px" width="13" height="12" viewBox="0 0 13 12"><path d="M.4 2.900H7M11 2.900H12.500M.4 9.300H2M7 9.300H12.500" stroke="#505050" stroke-width="1.600"/><path d="M9 1.200V4.700M5 7.500V11" stroke="#505050" stroke-width="2.500" stroke-linecap="round"/></svg>
<div class="kb" style="left:310.5px;top:325.4px"><i></i><i></i><i></i></div>
<div class="a" style="left:0px;top:345.6px;width:328.3px;height:1px;background:#858585"></div>
<svg style="left:7.8px;top:355.3px" width="10.4" height="9" viewBox="0 0 10.4 9"><path d="M0 0H10.4L5.2 9Z" fill="#7e7e7e"/></svg>
<svg style="left:27px;top:349.9px" width="16.500" height="18" viewBox="0 0 16.500 18"><path d="M1.500 0H11.500L16.500 4.500V16.500Q16.500 18 15 18H1.500Q0 18 0 16.500V1.500Q0 0 1.500 0Z" fill="#fafafa" stroke="#c0c0c0" stroke-width=".6"/><path d="M6.400 5L5.400 14M10.600 5L9.600 14M3.600 7.800H12.800M3.200 11.200H12.400" stroke="#3c9140" stroke-width="1.500"/></svg>
<div class="a" style="left:50.3px;top:350.7px;width:16.4px;height:17px;background:#f0f0f0;border:1px solid #b2b2b2;border-radius:2.500px"></div>
<svg style="left:50.3px;top:350.7px" width="16.4" height="17" viewBox="0 0 16.400 17"><path d="M3.600 8.800L6.800 12L12.800 4.800" fill="none" stroke="#2a2a2a" stroke-width="1.500"/></svg>
<span class="t b" id="t_tir" style="left:75.5px;top:349.88px;font-size:15px;">Touch Inpu Reader (Scr</span>
<svg style="left:255.7px;top:353.8px" width="12" height="12" viewBox="0 0 12 12"><circle cx="6" cy="6" r="6" fill="#505050"/><path d="M4.100 4.700Q4.100 2.900 6 2.900Q7.900 2.900 7.900 4.500Q7.900 5.500 6.900 6Q6 6.500 6 7.400" fill="none" stroke="#d4d4d4" stroke-width="1.400"/><circle cx="6" cy="9.300" r=".9" fill="#d4d4d4"/></svg>
<svg style="left:280.5px;top:353.6px" width="13" height="12" viewBox="0 0 13 12"><path d="M.4 2.900H7M11 2.900H12.500M.4 9.300H2M7 9.300H12.500" stroke="#505050" stroke-width="1.600"/><path d="M9 1.200V4.700M5 7.500V11" stroke="#505050" stroke-width="2.500" stroke-linecap="round"/></svg>
<div class="kb" style="left:310.5px;top:353.7px"><i></i><i></i><i></i></div>
<div class="a" style="left:0px;top:372.3px;width:328.3px;height:1px;background:#b8b8b8"></div>
<span class="t" id="t_script" style="left:24.7px;top:380.08px;font-size:15px;color:#858585">Script</span>
<div class="fld" style="left:175px;top:379.3px;width:148px;height:21px;background:#d6d6d6;border-color:#b8b8b8"></div>
<svg style="left:180px;top:382.8px" width="12.500" height="14" viewBox="0 0 12.500 14"><path d="M1 0H9L12.500 3.200V13Q12.500 14 11.500 14H1Q0 14 0 13V1Q0 0 1 0Z" fill="#ececec"/><path d="M5 4L4.300 11M8 4L7.300 11M2.800 6.200H9.800M2.400 8.800H9.400" stroke="#7fb884" stroke-width="1.200"/></svg>
<span class="t" id="t_tirea" style="left:195.3px;top:380.08px;font-size:15px;color:#868686">TouchInpuRea</span>
<svg style="left:304.4px;top:383.7px" width="12" height="12" viewBox="0 0 12 12"><circle cx="6" cy="6" r="5.300" fill="none" stroke="#808080" stroke-width="1.100"/><circle cx="6" cy="6" r="2" fill="#808080"/></svg>
<span class="t" id="t_touh" style="left:24.7px;top:404.98px;font-size:15px;">Touh Sensitivity</span>
<div class="fld" style="left:175px;top:404.3px;width:148px;height:21px;"></div>
<span class="t" id="f_touh" style="left:179.5px;top:406.38px;font-size:15px;">1</span>
<span class="t" id="t_player" style="left:24.7px;top:429.88px;font-size:15px;">Player</span>
<div class="fld" style="left:175px;top:429.3px;width:148px;height:21px;"></div>
<div class="a" style="left:298.8px;top:430.2px;width:22.600px;height:19.100px;background:#dcdcdc;border-radius:0 2px 2px 0"></div>
<svg style="left:180.3px;top:432.6px" width="13" height="14" viewBox="0 0 13 14"><path d="M6.500 .8L12.200 3.800V10.200L6.500 13.200L.8 10.200V3.800ZM.8 3.800L6.500 6.900L12.200 3.800M6.500 6.900V13.200" fill="none" stroke="#555" stroke-width="1.100" stroke-linejoin="round"/></svg>
<span class="t" id="t_cubef" style="left:195.3px;top:429.88px;font-size:15px;">Cube</span>
<svg style="left:304.4px;top:433.7px" width="12" height="12" viewBox="0 0 12 12"><circle cx="6" cy="6" r="5.300" fill="none" stroke="#484848" stroke-width="1.100"/><circle cx="6" cy="6" r="2" fill="#484848"/></svg>
<span class="t" id="t_itp" style="left:24.4px;top:454.88px;font-size:15px;">Initial Touch Point</span>
<span class="t" id="t_itpx" style="left:42.7px;top:479.88px;font-size:15px;">X</span>
<div class="fld" style="left:60px;top:478.3px;width:119px;height:23px;"></div>
<span class="t" id="f_itpx" style="left:64.2px;top:480.98px;font-size:15px;">0</span>
<span class="t" id="t_itpy" style="left:186.5px;top:479.88px;font-size:15px;">Y</span>
<div class="fld" style="left:204px;top:478.3px;width:119px;height:23px;"></div>
<span class="t" id="f_itpy" style="left:208.4px;top:480.98px;font-size:15px;">0</span>
<span class="t" id="t_pp" style="left:24.4px;top:504.98px;font-size:15px;">Point Position</span>
<span class="t" id="t_ppx" style="left:42.7px;top:529.88px;font-size:15px;">X</span>
<div class="fld" style="left:60px;top:528.3px;width:119px;height:23px;"></div>
<span class="t" id="f_ppx" style="left:64.2px;top:530.98px;font-size:15px;">0</span>
<span class="t" id="t_ppy" style="left:186.5px;top:529.88px;font-size:15px;">Y</span>
<div class="fld" style="left:204px;top:528.3px;width:119px;height:23px;"></div>
<span class="t" id="f_ppy" style="left:208.4px;top:530.98px;font-size:15px;">0</span>
<span class="t" id="t_ism" style="left:24.4px;top:555.27px;font-size:15px;">Is Moving</span>
<div class="a" style="left:175px;top:556.7px;width:16.6px;height:17px;background:#f0f0f0;border:1px solid #b2b2b2;border-radius:2.500px"></div>
</div>
<div class="a" style="left:0;top:601.4px;width:342px;height:23px;background:#cbcbcb;border-top:1px solid #999"></div>
<div class="a" style="left:5.5px;top:602px;width:1px;height:22px;background:#b0b0b0"></div>
<div class="a" style="left:166.2px;top:602px;width:1px;height:22px;background:#b0b0b0"></div>
<div class="a" style="left:322.2px;top:602px;width:1px;height:22px;background:#b0b0b0"></div>
<span class="t b" id="t_foot" style="left:10.5px;top:606.18px;font-size:15px;">InputReaderImage</span>
<svg style="left:151.4px;top:612.3px" width="9" height="5.800" viewBox="0 0 9 5.800"><path d="M0 0H9L4.500 5.800Z" fill="#55554a"/></svg>
<div class="a" style="left:171.2px;top:613.6px;width:149px;height:1.200px;background:#8a8a8a"></div>
<div class="a" style="left:171.2px;top:617.4px;width:149px;height:1.200px;background:#8a8a8a"></div>
<div class="kb" style="left:332.3px;top:608.9px"><i></i><i></i><i></i></div>
</div>

<!-- BOTTOM -->
<div class="a" style="left:0;top:539px;width:1160px;height:2px;background:#939393"></div>
<div class="pane" id="bottom" style="left:0;top:541px;width:1158px;height:132px;overflow:hidden">
 <div class="tabbar" style="border-radius:0 4px 0 0"></div>
 <div class="tab" style="left:99px;width:109.300px"></div>
<svg style="left:4px;top:6.3px" width="16" height="12.500" viewBox="0 0 16 12.500"><path d="M0 1.200Q0 0 1.200 0H6L7.600 2H14.800Q16 2 16 3.200V11.300Q16 12.500 14.800 12.500H1.200Q0 12.500 0 11.300Z" fill="#505050"/></svg>
<span class="t" id="t_project" style="left:24.5px;top:2.77px;font-size:15px;">Project</span>
<svg style="left:110px;top:5.5px" width="12" height="13.400" viewBox="0 0 12 13.400"><rect x="0" y="0" width="12" height="13.400" rx="1.300" fill="#505050"/><path d="M2 3H10M2 5.600H10M2 8.200H10M2 10.800H10" stroke="#cbcbcb" stroke-width="1.100"/></svg>
<span class="t" id="t_console" style="left:128.4px;top:2.77px;font-size:15px;">Console</span>
<div class="kb" style="left:1139.4px;top:4.9px"><i></i><i></i><i></i></div>
<div class="a" style="left:0;top:48.8px;width:1158px;height:1px;background:#a6a6a6"></div>
<span class="t" id="t_clear" style="left:1.3px;top:27.98px;font-size:15px;">Clear</span>
<div class="a" style="left:46.5px;top:29px;width:1px;height:16px;background:#999"></div>
<svg style="left:52.7px;top:33.7px" width="9" height="5.800" viewBox="0 0 9 5.800"><path d="M0 0H9L4.500 5.800Z" fill="#55554a"/></svg>
<div class="a" style="left:67.2px;top:24px;width:1px;height:25px;background:#a0a0a0"></div>
<span class="t" id="t_collapse" style="left:73.2px;top:27.98px;font-size:15px;">Collapse</span>
<div class="a" style="left:143.2px;top:24px;width:1px;height:25px;background:#a0a0a0"></div>
<span class="t" id="t_errp" style="left:151.3px;top:27.98px;font-size:15px;">Error Pause</span>
<div class="a" style="left:238.2px;top:24px;width:1px;height:25px;background:#a0a0a0"></div>
<span class="t" id="t_editor" style="left:243.1px;top:27.98px;font-size:15px;">Editor</span>
<svg style="left:289px;top:33.7px" width="9" height="5.800" viewBox="0 0 9 5.800"><path d="M0 0H9L4.500 5.800Z" fill="#55554a"/></svg>
<div class="a" style="left:303.5px;top:24px;width:1px;height:25px;background:#a0a0a0"></div>
<div class="fld" style="left:652.4px;top:27.2px;width:374.1px;height:19.300px;border-radius:4.500px;border-color:#a8a8a8"></div>
<svg style="left:658px;top:32.5px" width="10" height="10" viewBox="0 0 10 10"><circle cx="3.800" cy="3.800" r="2.700" fill="none" stroke="#606060" stroke-width="1.500"/><path d="M5.800 5.800L9 9" stroke="#606060" stroke-width="1.700"/></svg>
<div class="a" style="left:1031px;top:23.8px;width:127px;height:25px;background:#f0f0f0"></div>
<div class="a" style="left:1030.5px;top:24px;width:1px;height:25px;background:#999"></div>
<div class="a" style="left:1072.3px;top:24px;width:1px;height:25px;background:#999"></div>
<div class="a" style="left:1115.2px;top:24px;width:1px;height:25px;background:#999"></div>
<svg style="left:1037px;top:27.8px" width="18" height="19" viewBox="0 0 18 19"><circle cx="8.600" cy="8.400" r="8.300" fill="#969696"/><path d="M11 14L15.400 18.400L15 12Z" fill="#969696"/><path d="M7.700 3.400H9.500L9.300 10H7.900Z" fill="#f0f0f0"/><circle cx="8.600" cy="12.500" r="1.200" fill="#f0f0f0"/></svg>
<span class="t" id="t_c1" style="left:1058.4px;top:27.88px;font-size:15px;">0</span>
<svg style="left:1078.6px;top:28px" width="18" height="17" viewBox="0 0 18 17"><path d="M9 .4L17.600 15.200Q17.800 16.400 16.600 16.400H1.400Q.2 16.400 .4 15.200Z" fill="#969696"/><path d="M8.200 5H9.800L9.500 11.400H8.500Z" fill="#f0f0f0"/><circle cx="9" cy="13.600" r="1.100" fill="#f0f0f0"/></svg>
<span class="t" id="t_c2" style="left:1100.6px;top:27.88px;font-size:15px;">0</span>
<svg style="left:1122px;top:28px" width="17.200" height="16.600" viewBox="0 0 17.200 16.600"><path d="M5 0H12.200L17.200 5V11.600L12.200 16.600H5L0 11.600V5Z" fill="#969696"/><path d="M7.700 3.200H9.500L9.300 10H7.900Z" fill="#f0f0f0"/><circle cx="8.600" cy="12.500" r="1.200" fill="#f0f0f0"/></svg>
<span class="t" id="t_c3" style="left:1143.4px;top:27.88px;font-size:15px;">0</span>
</div>

</body></html>
